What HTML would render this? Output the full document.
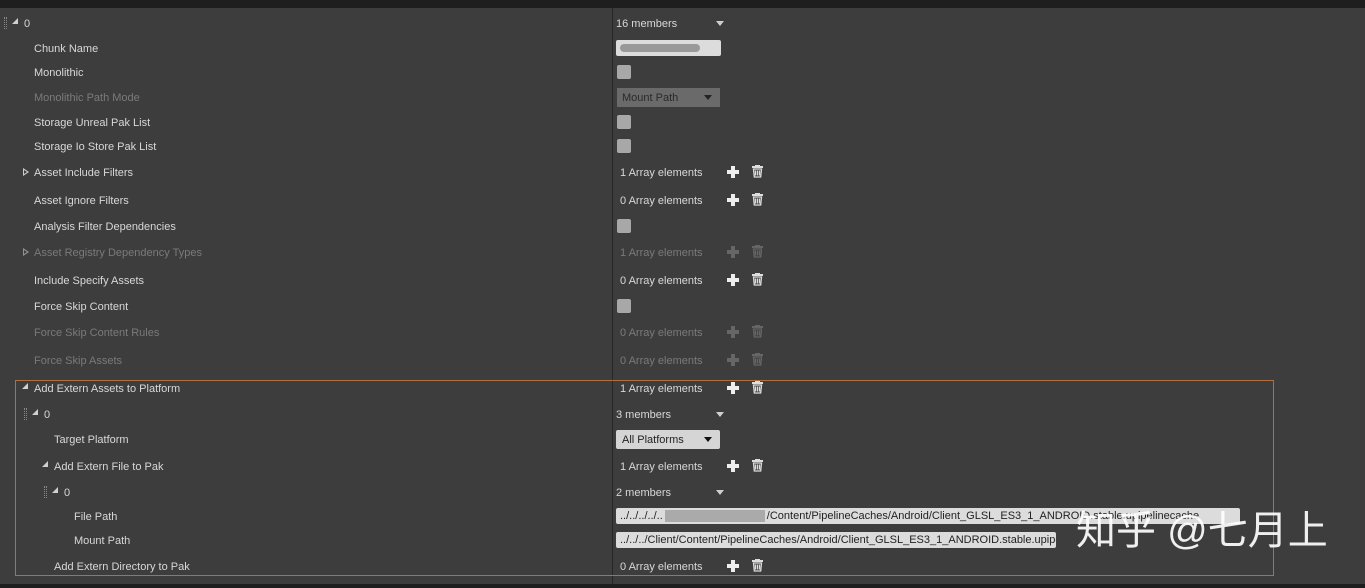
<!DOCTYPE html>
<html><head><meta charset="utf-8"><style>
*{margin:0;padding:0;box-sizing:border-box}
body{width:1365px;height:588px;background:#3d3d3d;position:relative;overflow:hidden;font-family:"Liberation Sans","Noto Sans CJK SC",sans-serif;font-size:11px;color:#d8d8d8}
.a{position:absolute;white-space:nowrap;line-height:14px;margin-top:1px}
.d{color:#7a7a7a}
.cb{position:absolute;width:14px;height:14px;background:#a8a8a8;border-radius:2px}
.tri{position:absolute;width:0;height:0;border-left:4px solid transparent;border-right:4px solid transparent;border-top:5px solid #cfcfcf}
.exp{position:absolute;width:0;height:0;border-left:6px solid transparent;border-bottom:6px solid #d0d0d0}
.col{position:absolute;width:0;height:0;border-top:4px solid transparent;border-bottom:4px solid transparent;border-left:6px solid #ccc}
.col::after{content:"";position:absolute;left:-5px;top:-2px;border-top:2px solid transparent;border-bottom:2px solid transparent;border-left:3px solid #3d3d3d}
.grip{position:absolute;width:3px;height:12px;border-left:1px dotted #888;border-right:1px dotted #888}
.tb{position:absolute;height:16px;background:#dcdcdc;border-radius:2px;color:#222;padding-left:4px;line-height:16px;white-space:nowrap;overflow:hidden}
</style></head><body>
<div style="position:absolute;left:0;top:0;width:1365px;height:8px;background:#1e1e1e"></div>
<div style="position:absolute;left:0;top:584px;width:1365px;height:4px;background:#1e1e1e"></div>
<div style="position:absolute;left:612px;top:8px;width:1px;height:576px;background:#262626"></div>
<div style="position:absolute;left:15px;top:380px;width:1259px;height:196px;border:1px solid #b06f42"></div>

<div class="grip" style="left:4px;top:17px"></div><div class="exp" style="left:12px;top:18px"></div><div class="a" style="left:24px;top:16px">0</div>
<div class="a" style="left:34px;top:41px">Chunk Name</div>
<div class="a" style="left:34px;top:65px">Monolithic</div>
<div class="a d" style="left:34px;top:90px">Monolithic Path Mode</div>
<div class="a" style="left:34px;top:115px">Storage Unreal Pak List</div>
<div class="a" style="left:34px;top:139px">Storage Io Store Pak List</div>
<div class="col" style="left:23px;top:168px"></div><div class="a" style="left:34px;top:165px">Asset Include Filters</div>
<div class="a" style="left:34px;top:193px">Asset Ignore Filters</div>
<div class="a" style="left:34px;top:219px">Analysis Filter Dependencies</div>
<div class="col" style="left:23px;top:248px;opacity:.6"></div><div class="a d" style="left:34px;top:245px">Asset Registry Dependency Types</div>
<div class="a" style="left:34px;top:273px">Include Specify Assets</div>
<div class="a" style="left:34px;top:299px">Force Skip Content</div>
<div class="a d" style="left:34px;top:325px">Force Skip Content Rules</div>
<div class="a d" style="left:34px;top:353px">Force Skip Assets</div>
<div class="exp" style="left:22px;top:383px"></div><div class="a" style="left:34px;top:381px">Add Extern Assets to Platform</div>
<div class="grip" style="left:24px;top:408px"></div><div class="exp" style="left:32px;top:409px"></div><div class="a" style="left:44px;top:407px">0</div>
<div class="a" style="left:54px;top:432px">Target Platform</div>
<div class="exp" style="left:42px;top:461px"></div><div class="a" style="left:54px;top:459px">Add Extern File to Pak</div>
<div class="grip" style="left:44px;top:486px"></div><div class="exp" style="left:52px;top:487px"></div><div class="a" style="left:64px;top:485px">0</div>
<div class="a" style="left:74px;top:509px">File Path</div>
<div class="a" style="left:74px;top:533px">Mount Path</div>
<div class="a" style="left:54px;top:559px">Add Extern Directory to Pak</div>

<div class="a" style="left:616px;top:16px">16 members</div><div class="tri" style="left:716px;top:21px"></div>
<div class="tb" style="left:616px;top:40px;width:105px"><div style="margin-top:4px;width:80px;height:8px;background:#999;border-radius:4px"></div></div>
<div class="cb" style="left:617px;top:65px"></div>
<div style="position:absolute;left:617px;top:88px;width:103px;height:19px;background:#6a6a6a"></div><div class="a" style="left:622px;top:90px;color:#2a2a2a">Mount Path</div><div class="tri" style="left:704px;top:95px;border-top-color:#222"></div>
<div class="cb" style="left:617px;top:115px"></div>
<div class="cb" style="left:617px;top:139px"></div>
<div class="cb" style="left:617px;top:219px"></div>
<div class="cb" style="left:617px;top:299px"></div>

<svg width="0" height="0" style="position:absolute"><defs>
<g id="p"><rect x="4" y="0" width="4" height="12" fill="currentColor"/><rect x="0" y="4" width="12" height="4" fill="currentColor"/></g>
<g id="t"><rect x="0" y="1" width="11" height="2" fill="currentColor"/><rect x="3" y="0" width="5" height="2" fill="currentColor"/><path d="M1.5 4h8l-0.8 8h-6.4z M3.5 5.5v5 M5.5 5.5v5 M7.5 5.5v5" fill="none" stroke="currentColor" stroke-width="1.3"/></g>
</defs></svg>

<div class="a" style="left:620px;top:165px">1 Array elements</div>
<div class="a" style="left:620px;top:193px">0 Array elements</div>
<div class="a d" style="left:620px;top:245px">1 Array elements</div>
<div class="a" style="left:620px;top:273px">0 Array elements</div>
<div class="a d" style="left:620px;top:325px">0 Array elements</div>
<div class="a d" style="left:620px;top:353px">0 Array elements</div>
<div class="a" style="left:620px;top:381px">1 Array elements</div>
<div class="a" style="left:616px;top:407px">3 members</div><div class="tri" style="left:716px;top:412px"></div>
<div style="position:absolute;left:616px;top:430px;width:104px;height:19px;background:#d5d5d5;border-radius:2px"></div><div class="a" style="left:622px;top:432px;color:#222">All Platforms</div><div class="tri" style="left:704px;top:437px;border-top-color:#111"></div>
<div class="a" style="left:620px;top:459px">1 Array elements</div>
<div class="a" style="left:616px;top:485px">2 members</div><div class="tri" style="left:716px;top:490px"></div>
<div class="tb" style="left:616px;top:508px;width:624px">../../../../..<span style="display:inline-block;width:100px;height:12px;background:#aaa;vertical-align:middle;margin:0 2px"></span>/Content/PipelineCaches/Android/Client_GLSL_ES3_1_ANDROID.stable.upipelinecache</div>
<div class="tb" style="left:616px;top:532px;width:440px">../../../Client/Content/PipelineCaches/Android/Client_GLSL_ES3_1_ANDROID.stable.upipelinecache</div>
<div class="a" style="left:620px;top:559px">0 Array elements</div>

<svg style="position:absolute;left:727px;top:166px" width="12" height="12" color="#eee"><use href="#p"/></svg><svg style="position:absolute;left:752px;top:165px" width="12" height="13" color="#ddd"><use href="#t"/></svg>
<svg style="position:absolute;left:727px;top:194px" width="12" height="12" color="#eee"><use href="#p"/></svg><svg style="position:absolute;left:752px;top:193px" width="12" height="13" color="#ddd"><use href="#t"/></svg>
<svg style="position:absolute;left:727px;top:246px" width="12" height="12" color="#666"><use href="#p"/></svg><svg style="position:absolute;left:752px;top:245px" width="12" height="13" color="#666"><use href="#t"/></svg>
<svg style="position:absolute;left:727px;top:274px" width="12" height="12" color="#eee"><use href="#p"/></svg><svg style="position:absolute;left:752px;top:273px" width="12" height="13" color="#ddd"><use href="#t"/></svg>
<svg style="position:absolute;left:727px;top:326px" width="12" height="12" color="#666"><use href="#p"/></svg><svg style="position:absolute;left:752px;top:325px" width="12" height="13" color="#666"><use href="#t"/></svg>
<svg style="position:absolute;left:727px;top:354px" width="12" height="12" color="#666"><use href="#p"/></svg><svg style="position:absolute;left:752px;top:353px" width="12" height="13" color="#666"><use href="#t"/></svg>
<svg style="position:absolute;left:727px;top:382px" width="12" height="12" color="#eee"><use href="#p"/></svg><svg style="position:absolute;left:752px;top:381px" width="12" height="13" color="#ddd"><use href="#t"/></svg>
<svg style="position:absolute;left:727px;top:460px" width="12" height="12" color="#eee"><use href="#p"/></svg><svg style="position:absolute;left:752px;top:459px" width="12" height="13" color="#ddd"><use href="#t"/></svg>
<svg style="position:absolute;left:727px;top:560px" width="12" height="12" color="#eee"><use href="#p"/></svg><svg style="position:absolute;left:752px;top:559px" width="12" height="13" color="#ddd"><use href="#t"/></svg>

<div class="a" style="left:1076px;top:506px;font-size:40px;line-height:48px;color:#fff;opacity:.92">知乎 @七月上</div>
</body></html>
